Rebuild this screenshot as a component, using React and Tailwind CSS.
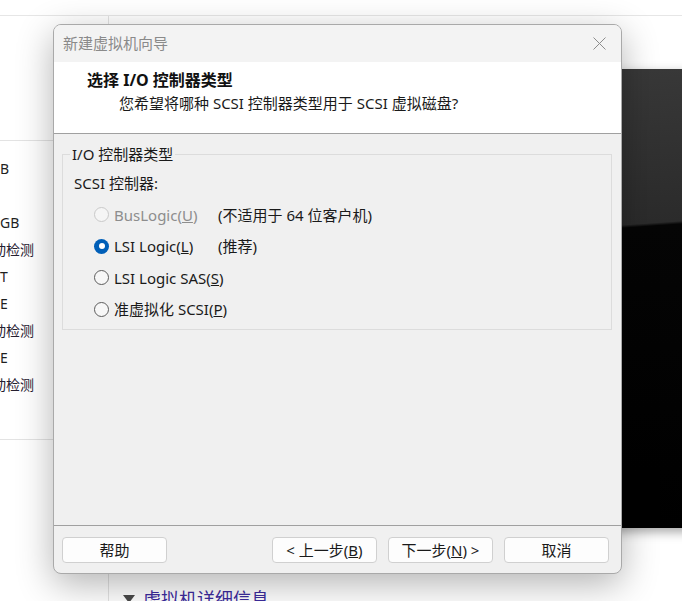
import React from "react";

const font = { fontFamily: '"Noto Sans", "Noto Sans CJK SC", sans-serif' };

const Radio = ({ state }) => {
  if (state === "checked") {
    return (
      <span className="w-[15px] h-[15px] rounded-full bg-[#005fb8] flex items-center justify-center shrink-0">
        <span className="w-[6px] h-[6px] rounded-full bg-white" />
      </span>
    );
  }
  if (state === "disabled") {
    return <span className="w-[15px] h-[15px] rounded-full border border-[#c9c9c9] bg-[#f5f5f5] shrink-0" />;
  }
  return <span className="w-[15px] h-[15px] rounded-full border border-[#5c5c5c] bg-[#f7f7f7] shrink-0" />;
};

const Option = ({ state, label, mnemonic, note }) => (
  <div className="flex items-center h-[31.5px] whitespace-nowrap">
    <div className="w-[124px] shrink-0 flex items-center gap-[5px]">
      <Radio state={state} />
      <span className={state === "disabled" ? "text-[#8d8d8d]" : "text-[#1a1a1a]"}>
        {label}(<u>{mnemonic}</u>)
      </span>
    </div>
    {note && <span className="text-[#1a1a1a]">{note}</span>}
  </div>
);

const Button = ({ children, className = "" }) => (
  <button
    className={`w-[105px] h-[26px] rounded-[4px] border border-[#d0d0d0] bg-[#fdfdfd] text-[15px] text-[#1a1a1a] flex items-center justify-center whitespace-nowrap ${className}`}
  >
    {children}
  </button>
);

export default function App() {
  return (
    <div className="relative w-[682px] h-[601px] overflow-hidden bg-white text-[15px]" style={font}>
      {/* background window */}
      <div className="h-[16px] border-b border-[#e6e6e6]" />
      <div className="flex h-[585px]">
        <div className="w-[109px] shrink-0 border-r border-[#e3e3e3] flex flex-col">
          <div className="h-[125px] shrink-0 border-b border-[#e3e3e3]" />
          <div className="pt-[14px] flex flex-col text-[14px] text-[#1f1f1f] leading-[27px] whitespace-nowrap">
            <span>B</span>
            <span>&nbsp;</span>
            <span>GB</span>
            <span className="ml-[-22px] text-[#262030]">自动检测</span>
            <span>T</span>
            <span>E</span>
            <span className="ml-[-22px] text-[#262030]">自动检测</span>
            <span>E</span>
            <span className="ml-[-22px] text-[#262030]">自动检测</span>
          </div>
          <div className="mt-[41px] border-b border-[#e3e3e3]" />
        </div>
        <div className="flex-1 flex flex-col">
          <div className="h-[53px] shrink-0" />
          <div className="shrink-0 ml-[40px] mr-[-20px] h-[459px] bg-[linear-gradient(176deg,#3b3b3b_0%,#2b2b2b_38%,#050505_38.6%,#000_100%)] shadow-[0_4px_10px_rgba(0,0,0,0.35)]" />
          <div className="shrink-0 mt-[60px] flex items-center pl-[14px] gap-[8px]">
            <svg width="12" height="8" viewBox="0 0 12 8">
              <path d="M0 0 H12 L6 8 Z" fill="#4a4a4a" />
            </svg>
            <span className="text-[18px] text-[#3d2c9e] leading-[22px] whitespace-nowrap">虚拟机详细信息</span>
            <div className="flex-1 h-px bg-[#dcdcdc] mt-[4px]" />
          </div>
        </div>
      </div>

      {/* wizard dialog */}
      <div className="absolute left-[53px] top-[24px] w-[569px] h-[550px] rounded-[8px] border border-[#a9a9a9] overflow-hidden flex flex-col bg-[#f0f0f0] shadow-[0_10px_36px_rgba(0,0,0,0.3)]">
        <div className="h-[37px] shrink-0 bg-[#f3f3f3] flex items-center justify-between pl-[9px] pr-[15px]">
          <span className="text-[15px] text-[#8a8a8a]">新建虚拟机向导</span>
          <svg width="13" height="13" viewBox="0 0 13 13">
            <path d="M0.5 0.5 L12.5 12.5 M12.5 0.5 L0.5 12.5" stroke="#8c8c8c" strokeWidth="1" />
          </svg>
        </div>
        <div className="h-[72px] shrink-0 bg-white border-b border-[#a0a0a0] flex flex-col pt-[7px]">
          <span className="pl-[33px] text-[16px] font-bold text-[#111] leading-[23px]">选择 I/O 控制器类型</span>
          <span className="pl-[65px] text-[#1a1a1a] leading-[23px]">您希望将哪种 SCSI 控制器类型用于 SCSI 虚拟磁盘?</span>
        </div>
        <div className="flex-1 flex flex-col">
          <div className="mt-[20px] ml-[8px] w-[550px] h-[176px] border border-[#dcdcdc] relative">
            <span className="absolute left-[7px] top-[-12px] px-[2px] bg-[#f0f0f0] text-[#1a1a1a] leading-[22px]">I/O 控制器类型</span>
            <div className="pt-[17px] pl-[11px] text-[#1a1a1a] leading-[22px]">SCSI 控制器:</div>
            <div className="mt-[5px] pl-[31px] flex flex-col">
              <Option state="disabled" label="BusLogic" mnemonic="U" note="(不适用于 64 位客户机)" />
              <Option state="checked" label="LSI Logic" mnemonic="L" note="(推荐)" />
              <Option state="normal" label="LSI Logic SAS" mnemonic="S" />
              <Option state="normal" label="准虚拟化 SCSI" mnemonic="P" />
            </div>
          </div>
        </div>
        <div className="h-[48px] shrink-0 border-t border-[#a0a0a0] flex items-start pt-[11px] pl-[8px]">
          <Button>帮助</Button>
          <Button className="ml-[105px]">&lt; 上一步(<u>B</u>)</Button>
          <Button className="ml-[11px]">下一步(<u>N</u>) &gt;</Button>
          <Button className="ml-[11px]">取消</Button>
        </div>
      </div>
    </div>
  );
}
